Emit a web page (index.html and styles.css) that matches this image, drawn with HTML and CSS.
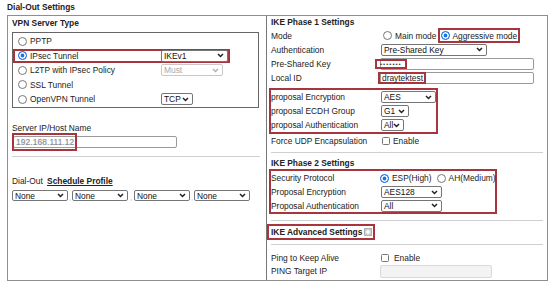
FILE: index.html
```html
<!DOCTYPE html>
<html>
<head>
<meta charset="utf-8">
<title>Dial-Out Settings</title>
<link rel="stylesheet" href="styles.css">
</head>
<body>
<div class="title">Dial-Out Settings</div>
<div class="panels">
  <div class="col left">
    <div class="h">VPN Server Type</div>
    <div class="fieldset">
      <div class="opt"><span class="radio"></span><span class="olbl">PPTP</span></div>
      <div class="opt mark"><span class="radio on"></span><span class="olbl">IPsec Tunnel</span><span class="sel w-ike">IKEv1<svg class="chev" viewBox="0 0 7 5" width="7" height="5"><path d="M1 1l2.5 2.5L6 1"/></svg></span></div>
      <div class="opt"><span class="radio"></span><span class="olbl">L2TP with IPsec Policy</span><span class="sel off w-must">Must<svg class="chev" viewBox="0 0 7 5" width="7" height="5"><path d="M1 1l2.5 2.5L6 1"/></svg></span></div>
      <div class="opt"><span class="radio"></span><span class="olbl">SSL Tunnel</span></div>
      <div class="opt"><span class="radio"></span><span class="olbl">OpenVPN Tunnel</span><span class="sel w-tcp">TCP<svg class="chev" viewBox="0 0 7 5" width="7" height="5"><path d="M1 1l2.5 2.5L6 1"/></svg></span></div>
    </div>
    <div class="srv-lbl">Server IP/Host Name</div>
    <div class="input srv"><span class="mark-ip">192.168.111.12</span></div>
    <hr class="sep sep-left">
    <div class="sched-lbl">Dial-Out <span class="link">Schedule Profile</span></div>
    <div class="sched">
      <span class="sel small w-none">None<svg class="chev" viewBox="0 0 7 5" width="7" height="5"><path d="M1 1l2.5 2.5L6 1"/></svg></span><span class="comma">,</span>
      <span class="sel small w-none">None<svg class="chev" viewBox="0 0 7 5" width="7" height="5"><path d="M1 1l2.5 2.5L6 1"/></svg></span><span class="comma wide">,</span>
      <span class="sel small w-none">None<svg class="chev" viewBox="0 0 7 5" width="7" height="5"><path d="M1 1l2.5 2.5L6 1"/></svg></span><span class="comma">,</span>
      <span class="sel small w-none">None<svg class="chev" viewBox="0 0 7 5" width="7" height="5"><path d="M1 1l2.5 2.5L6 1"/></svg></span>
    </div>
  </div>

  <div class="col right">
    <div class="rh">IKE Phase 1 Settings</div>
    <div class="row r-mode"><span class="rlbl">Mode</span>
      <span class="radio main"></span><span class="rtxt">Main mode</span>
      <span class="mark-aggr"><span class="radio on"></span><span class="rtxt">Aggressive mode</span></span>
    </div>
    <div class="row r-auth"><span class="rlbl">Authentication</span><span class="sel w-psk">Pre-Shared Key<svg class="chev" viewBox="0 0 7 5" width="7" height="5"><path d="M1 1l2.5 2.5L6 1"/></svg></span></div>
    <div class="row"><span class="rlbl">Pre-Shared Key</span><span class="input wide-in"><span class="mark-psk"><span class="dots">•••••••</span></span></span></div>
    <div class="row"><span class="rlbl">Local ID</span><span class="input wide-in"><span class="mark-lid">draytektest</span></span></div>
    <div class="group prop">
      <div class="row"><span class="rlbl">proposal Encryption</span><span class="sel w-aes">AES<svg class="chev" viewBox="0 0 7 5" width="7" height="5"><path d="M1 1l2.5 2.5L6 1"/></svg></span></div>
      <div class="row"><span class="rlbl">proposal ECDH Group</span><span class="sel w-g1">G1<svg class="chev" viewBox="0 0 7 5" width="7" height="5"><path d="M1 1l2.5 2.5L6 1"/></svg></span></div>
      <div class="row"><span class="rlbl">proposal Authentication</span><span class="sel w-all">All<svg class="chev" viewBox="0 0 7 5" width="7" height="5"><path d="M1 1l2.5 2.5L6 1"/></svg></span></div>
    </div>
    <div class="row"><span class="rlbl">Force UDP Encapsulation</span><span class="cb cb-force"></span><span class="cbtxt">Enable</span></div>
    <hr class="sep sep-1">
    <div class="rh2">IKE Phase 2 Settings</div>
    <div class="group p2">
      <div class="row"><span class="rlbl">Security Protocol</span><span class="radio on esp"></span><span class="rtxt">ESP(High)</span><span class="radio ah"></span><span class="rtxt">AH(Medium)</span></div>
      <div class="row"><span class="rlbl">Proposal Encryption</span><span class="sel w-aes128">AES128<svg class="chev" viewBox="0 0 7 5" width="7" height="5"><path d="M1 1l2.5 2.5L6 1"/></svg></span></div>
      <div class="row last"><span class="rlbl">Proposal Authentication</span><span class="sel w-aes128">All<svg class="chev" viewBox="0 0 7 5" width="7" height="5"><path d="M1 1l2.5 2.5L6 1"/></svg></span></div>
    </div>
    <hr class="sep sep-2">
    <div class="adv">IKE Advanced Settings<svg class="plus" viewBox="0 0 8 8" width="8" height="8"><rect x="0.5" y="0.5" width="7" height="7" fill="#cfcfcf" stroke="#b0b0b0"/><path d="M4 1.8v4.4M1.8 4h4.4" stroke="#fff" stroke-width="1.4"/></svg></div>
    <hr class="sep sep-3">
    <div class="row r-ping"><span class="rlbl">Ping to Keep Alive</span><span class="cb cb-ping"></span><span class="cbtxt">Enable</span></div>
    <div class="row"><span class="rlbl">PING Target IP</span><span class="input dis"></span></div>
  </div>
</div>
</body>
</html>
```

FILE: styles.css
```css
html, body {
  margin: 0;
  padding: 0;
}
body {
  font-family: "Liberation Sans", Arial, sans-serif;
  font-size: 8.4px;
  color: #222;
  background: #fff;
  width: 554px;
  height: 288px;
  overflow: hidden;
}
.title {
  height: 15px;
  line-height: 15px;
  padding-left: 7px;
  font-weight: bold;
}
.panels {
  margin-left: 7px;
  width: 541px;
  height: 266px;
  box-sizing: border-box;
  border: 1px solid #8e8e8e;
  display: grid;
  grid-template-columns: 259px 1fr;
}
.col.left {
  border-right: 1px solid #777;
  padding-left: 4px;
}
.col.right {
  padding-left: 4px;
}

/* shared controls */
.radio {
  display: inline-block;
  flex: none;
  width: 9px;
  height: 9px;
  box-sizing: border-box;
  border: 1px solid #777;
  border-radius: 50%;
  background: #fff;
}
.radio.on {
  border-color: #1a73e8;
  background: #1a73e8;
  box-shadow: inset 0 0 0 1.6px #fff;
}
.sel {
  display: inline-flex;
  flex: none;
  align-items: center;
  justify-content: space-between;
  box-sizing: border-box;
  height: 12px;
  border: 1px solid #767676;
  border-radius: 2px;
  padding: 0 3px 0 2px;
  background: #fff;
  color: #111;
}
.sel.small { height: 11px; }
.chev { flex: none; }
.chev path {
  fill: none;
  stroke: #222;
  stroke-width: 1.5;
}
.sel.off {
  border-color: #c8c8c8;
  color: #a8a8a8;
}
.sel.off .chev path { stroke: #b0b0b0; }
.input {
  display: flex;
  align-items: center;
  box-sizing: border-box;
  height: 12px;
  border: 1px solid #9a9a9a;
  border-radius: 2px;
  background: #fff;
}
.cb {
  display: inline-block;
  flex: none;
  width: 8px;
  height: 8px;
  box-sizing: border-box;
  border: 1px solid #767676;
  border-radius: 1.5px;
  background: #fff;
}
.sep {
  margin: 0;
  border: 0;
  border-top: 1px solid #cfcfcf;
  height: 0;
}

/* left column */
.h {
  height: 14px;
  line-height: 14px;
  font-weight: bold;
  margin-bottom: 2px;
}
.fieldset {
  width: 247px;
  box-sizing: border-box;
  border: 1px solid #666;
  padding-top: 1px;
}
.opt {
  display: flex;
  align-items: center;
  height: 14.5px;
  box-sizing: border-box;
  padding-left: 5px;
}
.opt .radio { margin-right: 3px; }
.opt.mark {
  width: 217px;
  border: 2px solid #a8343e;
  padding-left: 3px;
}
.olbl {
  flex: none;
  width: 131px;
}
.w-ike { width: 67px; }
.w-must { width: 62px; }
.w-tcp { width: 32px; }
.srv-lbl {
  margin-top: 13.5px;
  height: 14px;
  line-height: 14px;
}
.input.srv {
  margin-top: 1px;
  margin-left: 1px;
  width: 164px;
}
.mark-ip {
  flex: none;
  box-sizing: border-box;
  width: 65px;
  height: 18px;
  margin-left: -2px;
  border: 2px solid #a8343e;
  display: flex;
  align-items: center;
  padding-left: 2px;
  color: #8c9096;
  letter-spacing: 0.1px;
  text-shadow: 0 0 1px #b8bcc2;
}
.sep-left {
  margin-top: 8px;
  width: 248px;
}
.sched-lbl {
  margin-top: 17px;
  height: 14px;
  line-height: 14px;
}
.link {
  font-weight: bold;
  text-decoration: underline;
  margin-left: 2px;
}
.sched {
  margin-top: 2px;
  display: flex;
  align-items: center;
}
.w-none { width: 56px; }
.comma {
  flex: none;
  width: 4px;
  text-align: center;
  color: #777;
  font-size: 6px;
  align-self: flex-end;
}
.comma.wide { width: 6px; }

/* right column */
.rh {
  height: 13px;
  line-height: 13px;
  font-weight: bold;
}
.rh2 {
  margin-top: 5px;
  height: 11px;
  line-height: 11px;
  font-weight: bold;
}
.row {
  display: flex;
  align-items: center;
  height: 14px;
}
.rlbl {
  flex: none;
  width: 109px;
}
.r-mode { height: 13px; }
.r-auth { height: 15px; }
.radio.main { margin-left: 3px; }
.rtxt { margin-left: 3px; flex: none; }
.mark-aggr {
  display: inline-flex;
  align-items: center;
  flex: none;
  box-sizing: border-box;
  height: 15px;
  margin-left: 2px;
  border: 2px solid #a8343e;
  padding: 0 1px 0 1px;
}
.mark-aggr .rtxt { margin-left: 2px; }
.row .sel { margin-left: 1px; }
.w-psk { width: 106px; }
.input.wide-in { width: 154px; }
.mark-psk {
  flex: none;
  box-sizing: border-box;
  width: 32px;
  height: 10px;
  margin-left: -6px;
  border: 2px solid #a8343e;
  display: flex;
  align-items: center;
  padding-left: 3px;
  overflow: hidden;
}
.dots {
  font-size: 6px;
  line-height: 6px;
  letter-spacing: 1px;
  color: #333;
}
.mark-lid {
  flex: none;
  box-sizing: border-box;
  height: 12px;
  margin-left: -3px;
  border: 2px solid #a8343e;
  display: flex;
  align-items: center;
  padding: 0 1px 0 2px;
}
.group {
  box-sizing: border-box;
  border: 2px solid #a8343e;
  margin-left: -2px;
}
.group.prop {
  width: 169px;
  margin-top: 3px;
}
.group.p2 {
  width: 228px;
}
.group.p2 .row.last { height: 13px; }
.w-aes { width: 55px; }
.w-g1 { width: 28px; }
.w-all { width: 23px; }
.w-aes128 { width: 61px; }
.cb-force { margin-left: 2px; }
.cbtxt { margin-left: 3px; }
.sep-1 {
  margin-top: 4px;
  width: 272px;
}
.radio.esp { margin-left: 0; }
.radio.ah { margin-left: 5px; }
.sep-2 {
  margin-top: 6px;
  width: 272px;
}
.adv {
  display: inline-flex;
  align-items: center;
  box-sizing: border-box;
  height: 16px;
  margin-top: 3px;
  margin-left: -4px;
  border: 2px solid #a8343e;
  padding: 0 1px 0 2px;
  font-weight: bold;
}
.plus {
  margin-left: 2px;
  flex: none;
}
.sep-3 {
  margin-top: 4px;
  width: 272px;
}
.r-ping {
  margin-top: 6px;
  height: 13px;
}
.cb-ping { margin-left: 1px; }
.cb-ping + .cbtxt { margin-left: 5px; }
.input.dis {
  width: 112px;
  height: 13px;
  border-color: #dadada;
  background: #f3f3f3;
}
```
